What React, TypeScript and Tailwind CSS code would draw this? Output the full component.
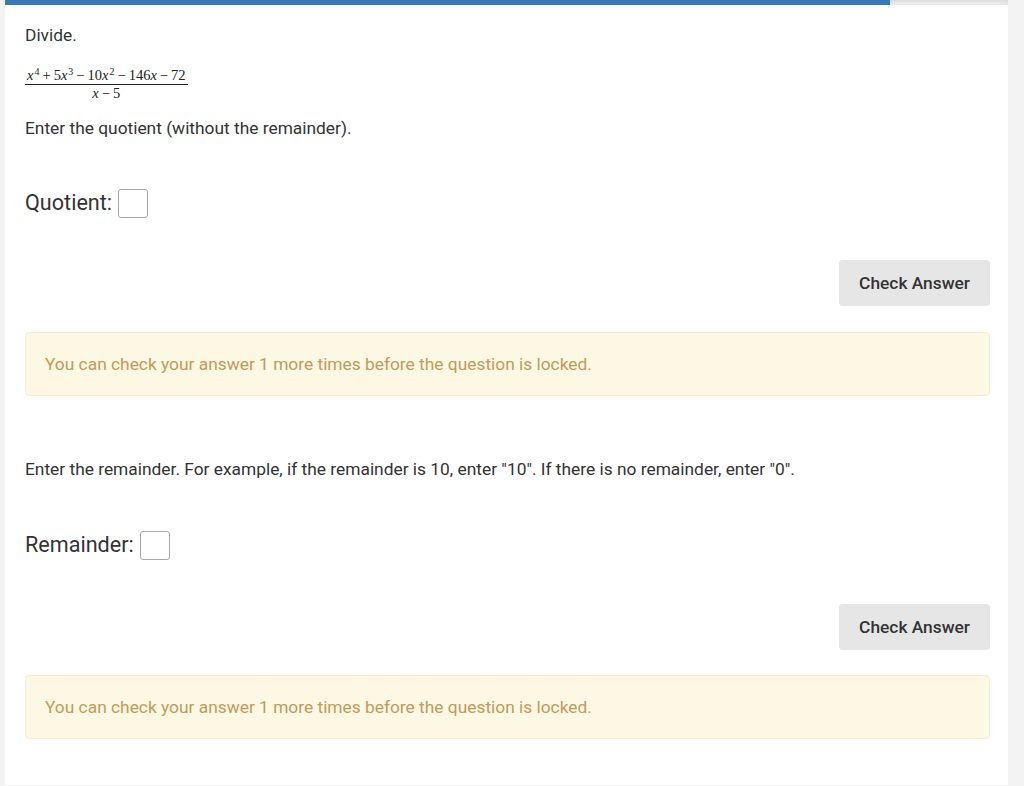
const FONT = "font-['Roboto','Liberation_Sans',sans-serif]";

function MathX() {
  return <i className="italic">x</i>;
}

function Op({ children }: { children: string }) {
  return <span className="mx-[3px]">{children}</span>;
}

function Fraction() {
  return (
    <span className="inline-flex flex-col items-center font-['Liberation_Serif','DejaVu_Serif',serif] text-[14.5px] leading-[16px] text-[#222]">
      <span className="px-[2px] pb-[1px]">
        <MathX />
        <sup className="ml-px text-[10px]">4</sup>
        <Op>+</Op>5<MathX />
        <sup className="ml-px text-[10px]">3</sup>
        <Op>−</Op>10<MathX />
        <sup className="ml-px text-[10px]">2</sup>
        <Op>−</Op>146<MathX />
        <Op>−</Op>72
      </span>
      <span className="h-px w-full bg-[#222]" />
      <span>
        <MathX />
        <Op>−</Op>5
      </span>
    </span>
  );
}

function AnswerRow({ label }: { label: string }) {
  return (
    <div className="flex items-center gap-[6px]">
      <span className="text-[21.6px] leading-[30px] text-[#333]">{label}</span>
      <span className="h-[29px] w-[30px] rounded-[3px] border border-[#a8a8a8] bg-white" />
    </div>
  );
}

function CheckBlock({ mt, alertMt }: { mt: string; alertMt: string }) {
  return (
    <>
      <div className={`flex justify-end ${mt}`}>
        <button className="h-[46px] rounded-[4px] bg-[#e6e6e6] px-[20px] text-[17.35px] font-medium text-[#333]">
          Check Answer
        </button>
      </div>
      <div
        className={`${alertMt} rounded-[4px] border border-[#faebcc] bg-[#fcf8e3] px-[19px] pb-[19px] pt-[19px] text-[17.35px] leading-6 text-[#c29b5a]`}
      >
        You can check your answer 1 more times before the question is locked.
      </div>
    </>
  );
}

export default function App() {
  return (
    <div className={`min-h-[786px] bg-[#f3f3f3] ${FONT}`}>
      <div className="ml-[5px] w-[1003px] bg-white">
        <div className="flex h-[5px]">
          <div className="w-[885px] bg-[#3579b6]" />
          <div className="flex-1 bg-[#e9e9e9] shadow-[inset_0_1px_2px_rgba(0,0,0,0.08)]" />
        </div>
        <div className="pb-[46px] pl-[20px] pr-[18px] pt-[18px] text-[17.35px] leading-6 text-[#333]">
          <p>Divide.</p>
          <div className="mt-[20px] flex">
            <Fraction />
          </div>
          <p className="mt-[15px]">Enter the quotient (without the remainder).</p>
          <div className="mt-[48px]">
            <AnswerRow label="Quotient:" />
          </div>
          <CheckBlock mt="mt-[42px]" alertMt="mt-[26px]" />
          <p className="mt-[61px]">
            Enter the remainder. For example, if the remainder is 10, enter "10". If there is no remainder, enter "0".
          </p>
          <div className="mt-[49px]">
            <AnswerRow label="Remainder:" />
          </div>
          <CheckBlock mt="mt-[44px]" alertMt="mt-[25px]" />
        </div>
      </div>
    </div>
  );
}
